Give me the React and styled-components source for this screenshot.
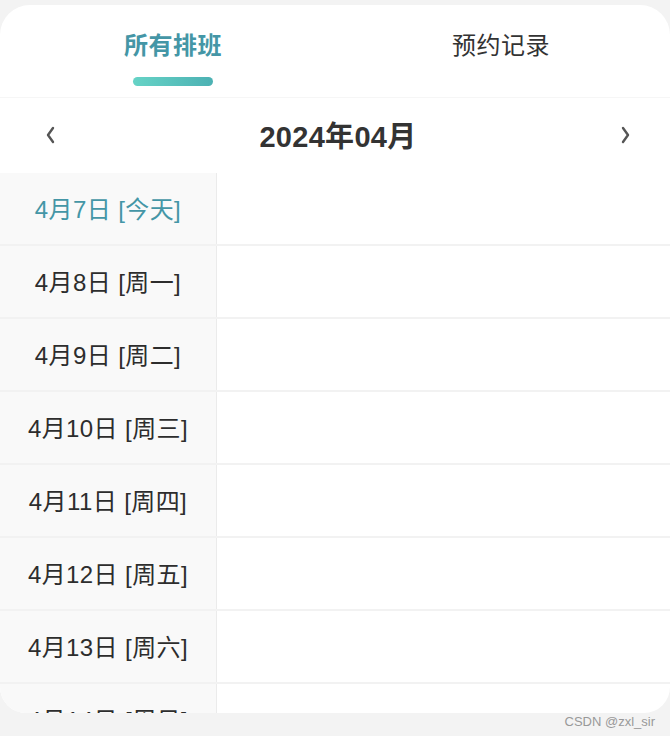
import React, { useState } from 'react';
import styled, { createGlobalStyle } from 'styled-components';

const GlobalStyle = createGlobalStyle`
  html, body {
    margin: 0;
    padding: 0;
    background: #f3f3f3;
    font-family: "Liberation Sans", "Noto Sans CJK SC", sans-serif;
  }
`;

const days = [
  { label: '4月7日 [今天]', today: true },
  { label: '4月8日 [周一]' },
  { label: '4月9日 [周二]' },
  { label: '4月10日 [周三]' },
  { label: '4月11日 [周四]' },
  { label: '4月12日 [周五]' },
  { label: '4月13日 [周六]' },
  { label: '4月14日 [周日]' },
];

function Chevron({ dir }) {
  const d = dir === 'left' ? 'M8 2 L3 9 L8 16' : 'M3 2 L8 9 L3 16';
  return (
    <svg width="11" height="18" viewBox="0 0 11 18">
      <path d={d} fill="none" stroke="#555" strokeWidth="2.4" strokeLinecap="round" strokeLinejoin="round" />
    </svg>
  );
}

export default function App() {
  const [tab, setTab] = useState(0);
  return (
    <>
      <GlobalStyle />
      <Page>
        <Card>
          <Tabs>
            {['所有排班', '预约记录'].map((t, i) => (
              <Tab key={t} onClick={() => setTab(i)}>
                <TabLabel active={i === tab}>{t}</TabLabel>
                <TabBar active={i === tab} />
              </Tab>
            ))}
          </Tabs>
          <MonthRow>
            <NavButton><Chevron dir="left" /></NavButton>
            <Month>2024年04月</Month>
            <NavButton><Chevron dir="right" /></NavButton>
          </MonthRow>
          <List>
            {days.map((d) => (
              <Row key={d.label}>
                <DateCell today={d.today}>{d.label}</DateCell>
                <SlotCell />
              </Row>
            ))}
          </List>
        </Card>
        <Watermark>CSDN @zxl_sir</Watermark>
      </Page>
    </>
  );
}

const Page = styled.div`
  width: 670px;
  height: 736px;
  padding-top: 5px;
  box-sizing: border-box;
  display: flex;
  flex-direction: column;
`;

const Card = styled.div`
  height: 708px;
  background: #fff;
  border-radius: 30px 30px 26px 26px;
  overflow: hidden;
  display: flex;
  flex-direction: column;
`;

const Tabs = styled.div`
  display: flex;
  padding: 0 5px 0 9px;
  height: 92px;
  border-bottom: 1px solid #f6f6f6;
`;

const Tab = styled.div`
  flex: 1;
  display: flex;
  flex-direction: column;
  align-items: center;
  padding-top: 26px;
  cursor: pointer;
`;

const TabLabel = styled.div`
  font-size: 24px;
  line-height: 30px;
  color: ${(p) => (p.active ? '#4496a6' : '#333')};
  font-weight: ${(p) => (p.active ? 600 : 400)};
  letter-spacing: 0.5px;
`;

const TabBar = styled.div`
  margin-top: 16px;
  width: 80px;
  height: 9px;
  border-radius: 5px;
  background: ${(p) => (p.active ? 'linear-gradient(90deg, #66d3c6, #4cb1b3)' : 'transparent')};
`;

const MonthRow = styled.div`
  height: 75px;
  display: flex;
  align-items: center;
  justify-content: space-between;
  padding: 0 33px 2px 39px;
  box-sizing: border-box;
`;

const NavButton = styled.div`
  width: 22px;
  display: flex;
  justify-content: center;
`;

const Month = styled.div`
  font-size: 29px;
  font-weight: 600;
  color: #333;
  letter-spacing: 0.3px;
  padding-bottom: 2px;
`;

const List = styled.div`
  flex: 1;
  overflow: hidden;
`;

const Row = styled.div`
  display: flex;
  height: 73px;
  box-sizing: border-box;
  border-bottom: 2px solid #f2f2f2;
`;

const DateCell = styled.div`
  width: 217px;
  background: #f9f9f9;
  border-right: 1px solid #ebebeb;
  display: flex;
  align-items: center;
  justify-content: center;
  padding-bottom: 3px;
  box-sizing: border-box;
  font-size: 24px;
  letter-spacing: 0.4px;
  color: ${(p) => (p.today ? '#4496a6' : '#2d2d2d')};
`;

const SlotCell = styled.div`
  flex: 1;
`;

const Watermark = styled.div`
  text-align: right;
  padding: 0 15px 0 0;
  margin-top: 1px;
  font-size: 13px;
  color: #999;
`;
